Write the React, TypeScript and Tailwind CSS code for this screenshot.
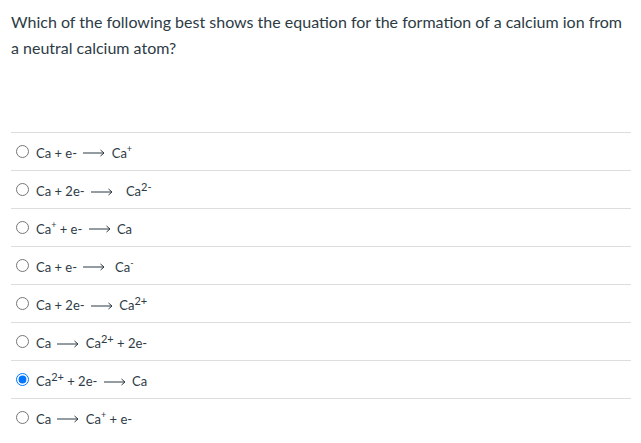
import React from 'react';

const Arrow = () => (
  <svg
    width="22"
    height="8"
    viewBox="0 0 22 8"
    className="mx-[3px] inline-block align-[0.5px]"
    fill="none"
    stroke="#2d3b45"
    strokeWidth="1"
  >
    <path d="M0 4h21" />
    <path d="M17.5 1 21 4 17.5 7" />
  </svg>
);

// tiny charge sign sitting near the top of the symbol
const Small = ({ c }: { c: string }) => (
  <span className="align-[6px] text-[9px] leading-none">{c}</span>
);
const Big = ({ c }: { c: string }) => (
  <span className="align-[5px] text-[11px] leading-none">{c}</span>
);

const options: React.ReactNode[] = [
  <>Ca + e- <Arrow /> Ca<Small c="+" /></>,
  <>Ca + 2e- <Arrow />  &nbsp;Ca<Big c="2-" /></>,
  <>Ca<Small c="+" /> + e- <Arrow /> Ca</>,
  <>Ca + e- <Arrow /> &nbsp;Ca<Small c="-" /></>,
  <>Ca + 2e- <Arrow /> Ca<Big c="2+" /></>,
  <>Ca <Arrow /> Ca<Big c="2+" /> + 2e-</>,
  <>Ca<Big c="2+" /> + 2e- <Arrow /> Ca</>,
  <>Ca <Arrow /> Ca<Small c="+" /> + e-</>,
];

export default function App() {
  return (
    <div className="flex h-[443px] w-[641px] flex-col gap-[71px] bg-white pl-[11px] pr-[10px] pt-[9px] font-['Lato','Liberation_Sans',sans-serif] font-normal text-[#2d3b45]">
      <p className="text-[16px] leading-[26px]">
        Which of the following best shows the equation for the formation of a calcium ion from a neutral calcium atom?
      </p>
      <div className="flex flex-col">
        {options.map((opt, i) => (
          <label
            key={i}
            className="flex h-[38px] items-center gap-[7px] border-t border-[#dddddd] pl-[5px] text-[13px]"
          >
            <input
              type="radio"
              name="answer"
              defaultChecked={i === 6}
              className="m-0 h-[13px] w-[13px]"
            />
            <span className="whitespace-pre leading-none">{opt}</span>
          </label>
        ))}
      </div>
    </div>
  );
}
